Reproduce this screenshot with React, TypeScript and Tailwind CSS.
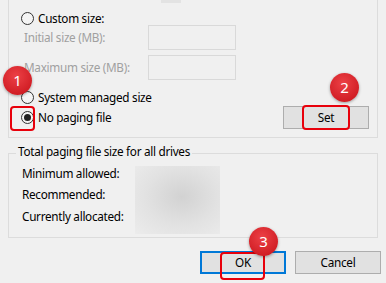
const font = { fontFamily: '"Noto Sans", "Open Sans", sans-serif' };

function Radio({ checked }: { checked?: boolean }) {
  return (
    <span className="flex h-[13px] w-[13px] shrink-0 items-center justify-center rounded-full border border-[#333333] bg-[#f4f4f4]">
      {checked && <span className="h-[7px] w-[7px] rounded-full bg-[#222222]" />}
    </span>
  );
}

function Badge({ n, className }: { n: number; className: string }) {
  return (
    <div
      className={`absolute flex h-[29px] w-[29px] items-center justify-center rounded-full bg-[radial-gradient(circle_at_45%_35%,#ec4146,#d21f26_70%,#b8151b)] text-[15px] tracking-normal text-white shadow-[0_1px_3px_rgba(0,0,0,0.35)] ${className}`}
    >
      {n}
    </div>
  );
}

export default function App() {
  return (
    <div
      className="relative h-[283px] w-[386px] overflow-hidden bg-[#f0f0f0] text-[11.75px] leading-none tracking-[-0.3px] text-black"
      style={font}
    >
      {/* upper group, its top is cut off */}
      <div className="ml-[8px] flex h-[138px] w-[370px] flex-col border-x border-b border-[#dcdcdc]">
        <div className="ml-[152px] h-[3px] w-[20px] bg-[#e3e3e3]" />
        <div className="mt-[9px] flex h-[13px] items-center gap-[4px] pl-[12px]">
          <Radio />
          <span>Custom size:</span>
        </div>
        <div className="flex h-[25px] items-center">
          <span className="w-[139px] pl-[15px] text-[#a0a0a0]">Initial size (MB):</span>
          <div className="h-[25px] w-[88px] border border-[#d9d9d9]" />
        </div>
        <div className="mt-[5px] flex h-[25px] items-center">
          <span className="w-[139px] pl-[15px] text-[#a0a0a0]">Maximum size (MB):</span>
          <div className="h-[25px] w-[88px] border border-[#d9d9d9]" />
        </div>
        <div className="mt-[11px] flex h-[13px] items-center gap-[4px] pl-[12px]">
          <Radio />
          <span>System managed size</span>
        </div>
        <div className="mt-[2px] flex h-[23px] items-center justify-between pl-[12px] pr-[8px]">
          <div className="flex items-center gap-[4px]">
            <Radio checked />
            <span>No paging file</span>
          </div>
          <button className="h-[23px] w-[86px] border border-[#adadad] bg-[#e1e1e1]">Set</button>
        </div>
      </div>

      {/* lower group */}
      <div className="relative ml-[8px] mt-[15px] flex h-[85px] w-[370px] border border-[#dcdcdc]">
        <span className="absolute -top-[8px] left-[7px] bg-[#f0f0f0] px-[2px]">
          Total paging file size for all drives
        </span>
        <div className="flex w-[126px] flex-col pl-[13px] pt-[9px]">
          <span className="flex h-[21.5px] items-center">Minimum allowed:</span>
          <span className="flex h-[21.5px] items-center">Recommended:</span>
          <span className="flex h-[21.5px] items-center">Currently allocated:</span>
        </div>
        <div className="mt-[12px] h-[68px] w-[85px] bg-[radial-gradient(ellipse_at_55%_45%,#d2d2d2,#e2e2e2_55%,#ececec)]" />
      </div>

      <div className="mr-[5px] mt-[13px] flex justify-end gap-[9px]">
        <button className="h-[23px] w-[86px] border-2 border-[#0078d7] bg-[#e1e1e1]">OK</button>
        <button className="h-[23px] w-[86px] border border-[#adadad] bg-[#e1e1e1]">Cancel</button>
      </div>

      {/* highlights */}
      <div className="absolute left-[10px] top-[106px] h-[25px] w-[25px] rounded-[4px] border-[2.5px] border-[#e8000b]" />
      <div className="absolute left-[302px] top-[105px] h-[25px] w-[48px] rounded-[4px] border-[2.5px] border-[#e8000b]" />
      <div className="absolute left-[220px] top-[252px] h-[28px] w-[45px] rounded-[4px] border-[2.5px] border-[#e8000b]" />

      <Badge n={1} className="left-[3px] top-[66px]" />
      <Badge n={2} className="left-[330px] top-[73px]" />
      <Badge n={3} className="left-[249px] top-[227px]" />
    </div>
  );
}
